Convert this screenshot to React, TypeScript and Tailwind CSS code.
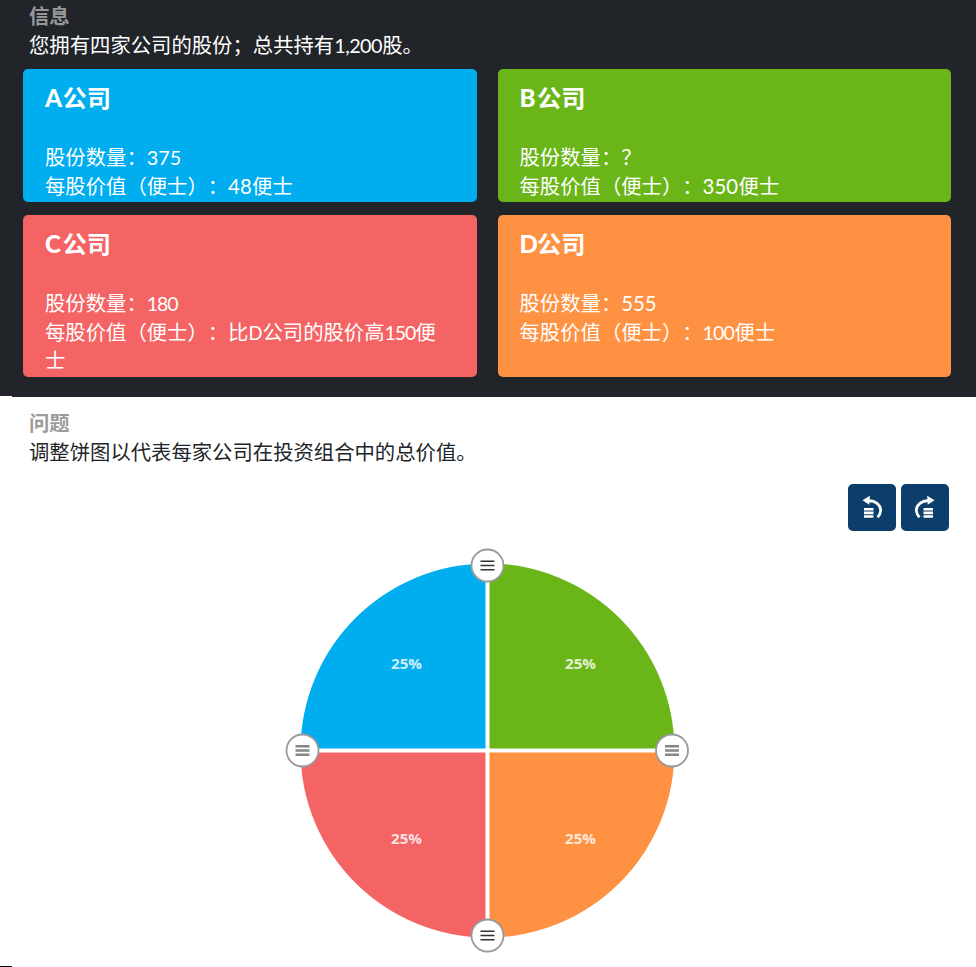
import type { ReactNode } from 'react';

type Company = {
  name: string;
  color: string;
  shares: ReactNode;
  price: ReactNode;
};

function Num({ children, className }: { children: ReactNode; className: string }) {
  return <span className={`inline-block whitespace-nowrap leading-none ${className}`}>{children}</span>;
}

const companies: Company[] = [
  {
    name: 'A',
    color: 'bg-[#00adef]',
    shares: <Num className="w-[34px] text-[19.8px]">375</Num>,
    price: <><Num className="w-[24px]">48</Num>便士</>,
  },
  {
    name: 'B',
    color: 'bg-[#6ab618]',
    shares: '？',
    price: <><Num className="w-[36px]">350</Num>便士</>,
  },
  {
    name: 'C',
    color: 'bg-[#f46464]',
    shares: <Num className="w-[31px] text-[19.5px] -tracking-[1.1px]">180</Num>,
    price: (
      <>
        比<Num className="w-[14px] text-[18.4px]">D</Num>公司的股价高
        <Num className="w-[31px] text-[19.5px] -tracking-[1.1px]">150</Num>便士
      </>
    ),
  },
  {
    name: 'D',
    color: 'bg-[#ff9142]',
    shares: <Num className="w-[36px]">555</Num>,
    price: <><Num className="w-[32px] text-[19.5px] -tracking-[0.9px]">100</Num>便士</>,
  },
];

function CompanyCard({ company }: { company: Company }) {
  return (
    <div className={`rounded-[5px] pl-[22px] pr-[22px] pt-[15px] text-white ${company.color}`}>
      <h2 className="text-[24.2px] font-bold leading-[28px]">
        <Num className="w-[17.5px] font-black">{company.name}</Num>公司
      </h2>
      <div className="mt-[31px]">
        <p>股份数量：{company.shares}</p>
        <p>每股价值（便士）：{company.price}</p>
      </div>
    </div>
  );
}

function UndoIcon({ className = '' }: { className?: string }) {
  return (
    <svg viewBox="0 0 32 32" className={`h-8 w-8 ${className}`} fill="none">
      <path d="M12 8.8C19 8.3 25 12.5 24.6 19C24.4 21.5 23.3 23.5 21.5 25.3" stroke="#fff" strokeWidth="2.8" />
      <path d="M6.5 8.3L13.8 3.8L13.3 12.8Z" fill="#fff" />
      <path d="M8 17.3H17.5M8 20.9H17.5M8 24.5H17.5" stroke="#fff" strokeWidth="2.6" />
    </svg>
  );
}

const slices = [
  { color: '#00adef', d: 'M202.5 202.5V15.5A187 187 0 0 0 15.5 202.5Z', x: 121.5, y: 121 },
  { color: '#6ab618', d: 'M202.5 202.5V15.5A187 187 0 0 1 389.5 202.5Z', x: 295.5, y: 121 },
  { color: '#f46464', d: 'M202.5 202.5V389.5A187 187 0 0 1 15.5 202.5Z', x: 121.5, y: 296 },
  { color: '#ff9142', d: 'M202.5 202.5V389.5A187 187 0 0 0 389.5 202.5Z', x: 295.5, y: 296 },
];

const handles = [
  { x: 202.5, y: 17.5, color: '#333333', w: 1.6 },
  { x: 387, y: 202.5, color: '#858585', w: 2.4 },
  { x: 202.5, y: 387.5, color: '#333333', w: 1.6 },
  { x: 17.5, y: 202.5, color: '#858585', w: 2.4 },
];

function PieChart() {
  return (
    <svg viewBox="0 0 405 405" className="h-[405px] w-[405px]">
      {slices.map((s) => (
        <path key={s.color} d={s.d} fill={s.color} />
      ))}
      <path d="M202.5 15V390M15 202.5H390" stroke="#fff" strokeWidth="4" />
      {slices.map((s) => (
        <text
          key={s.color}
          x={s.x}
          y={s.y}
          textAnchor="middle"
          textLength="31"
          lengthAdjust="spacingAndGlyphs"
          className="fill-white/80 font-['Open_Sans'] text-[15px] font-bold"
        >
          25%
        </text>
      ))}
      {handles.map((h) => (
        <g key={`${h.x}-${h.y}`} transform={`translate(${h.x} ${h.y})`}>
          <circle r="16" fill="#fff" stroke="#999" strokeWidth="1.8" />
          <path d="M-7 -4.2H7M-7 0H7M-7 4.2H7" stroke={h.color} strokeWidth={h.w} />
        </g>
      ))}
    </svg>
  );
}

export default function App() {
  return (
    <div
      className="relative h-[967px] w-[976px] overflow-hidden bg-white font-['Lato','Noto_Sans_CJK_SC',sans-serif] text-[20.35px] leading-[28.5px] [text-spacing-trim:space-all]"
      lang="zh-CN"
    >
      <section className="h-[397px] bg-[#212529] pt-[2px]">
        <div className="pl-[29px]">
          <h1 className="font-bold text-[#95979a]">信息</h1>
          <p className="text-white">
            您拥有四家公司的股份；总共持有<Num className="w-[48px] text-[19.8px] -tracking-[0.5px]">1,200</Num>股。
          </p>
        </div>
        <div className="ml-[23px] mt-[10px] grid w-[928px] grid-cols-2 grid-rows-[133px_162px] gap-x-[21px] gap-y-[13px]">
          {companies.map((c) => (
            <CompanyCard key={c.name} company={c} />
          ))}
        </div>
      </section>

      <section>
        <div className="pl-[29px] pt-[12px]">
          <h1 className="font-bold text-[#9b9b9b]">问题</h1>
          <p className="text-[#212529]">调整饼图以代表每家公司在投资组合中的总价值。</p>
        </div>
        <div className="mt-[18px] flex justify-end gap-[5px] pr-[27px]">
          <button className="flex h-[47px] w-[48px] items-center justify-center rounded-[5px] bg-[#0c3e6b]">
            <UndoIcon />
          </button>
          <button className="flex h-[47px] w-[48px] items-center justify-center rounded-[5px] bg-[#0c3e6b]">
            <UndoIcon className="-scale-x-100" />
          </button>
        </div>
        <div className="mt-[17px] pl-[285px]">
          <PieChart />
        </div>
      </section>

      <div className="absolute left-0 top-[396px] h-px w-3 bg-white" />
      <div className="absolute bottom-0 left-0 h-px w-3 bg-black" />
    </div>
  );
}
